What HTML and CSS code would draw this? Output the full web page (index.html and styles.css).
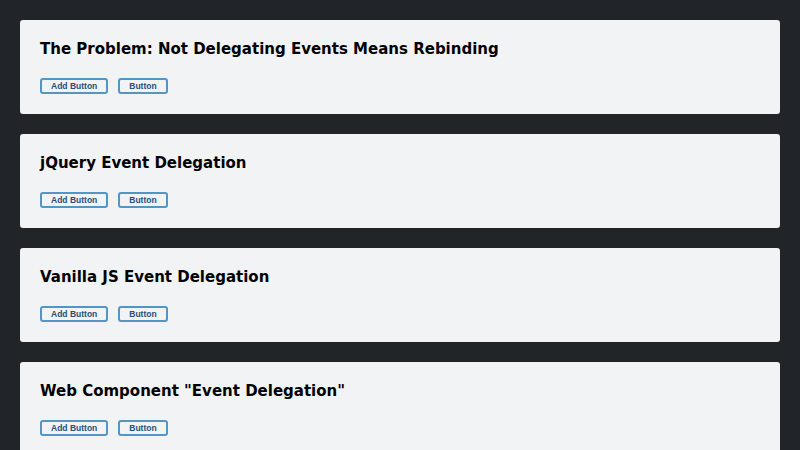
FILE: index.html
```html
<!DOCTYPE html>
<html>
<head>
<meta charset="utf-8">
<link rel="stylesheet" href="styles.css">
</head>
<body>
<main class="page">
  <section class="card">
    <h2 class="title">The Problem: Not Delegating Events Means Rebinding</h2>
    <div class="actions"><button class="btn">Add Button</button><button class="btn">Button</button></div>
  </section>
  <section class="card">
    <h2 class="title">jQuery Event Delegation</h2>
    <div class="actions"><button class="btn">Add Button</button><button class="btn">Button</button></div>
  </section>
  <section class="card">
    <h2 class="title">Vanilla JS Event Delegation</h2>
    <div class="actions"><button class="btn">Add Button</button><button class="btn">Button</button></div>
  </section>
  <section class="card">
    <h2 class="title">Web Component "Event Delegation"</h2>
    <div class="actions"><button class="btn">Add Button</button><button class="btn">Button</button></div>
  </section>
</main>
</body>
</html>
```
FILE: styles.css
```css
html, body {
  margin: 0;
  padding: 0;
  background: #212429;
}
body {
  font-family: "DejaVu Sans", sans-serif;
}
.page {
  display: flex;
  flex-direction: column;
  gap: 20px;
  padding: 20px;
}
.card {
  background: #f1f3f5;
  border-radius: 3px;
  padding: 20px;
  height: 94px;
  box-sizing: border-box;
  display: flex;
  flex-direction: column;
}
.title {
  margin: 0 0 20px 0;
  font-size: 15px;
  line-height: 18px;
  font-weight: bold;
  color: #000;
}
.actions {
  display: flex;
  gap: 10px;
}
.btn {
  font-family: "Liberation Sans", Arial, sans-serif;
  font-weight: bold;
  font-size: 8.5px;
  color: #22507c;
  background: #f1f3f5;
  border: 2px solid #5595c4;
  border-radius: 3px;
  height: 16px;
  padding: 0 9px;
  line-height: 12px;
}
```
